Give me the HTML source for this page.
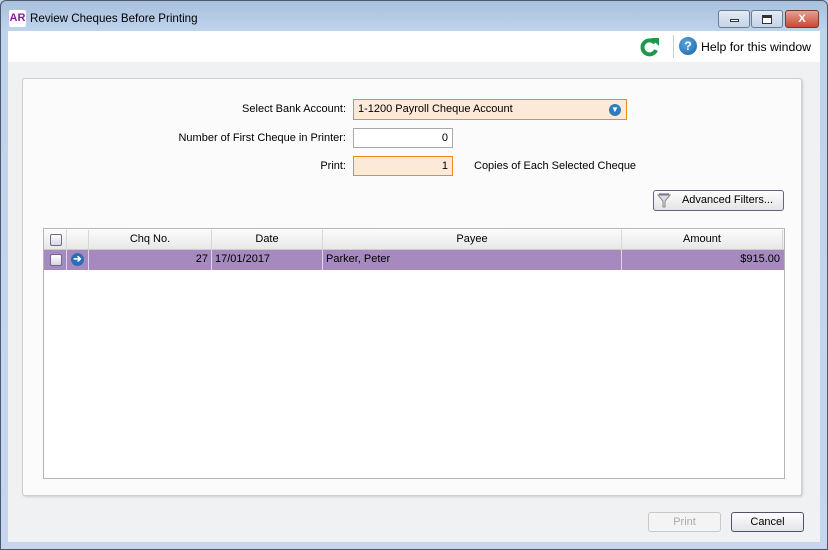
<!DOCTYPE html>
<html><head><style>
*{box-sizing:border-box;margin:0;padding:0}
body{width:828px;height:550px;overflow:hidden;font-family:"Liberation Sans",sans-serif;font-size:11px;color:#000;background:#bcd1ea;position:relative}
.a{position:absolute}
.win{left:0;top:0;width:828px;height:550px;border:1px solid #4a5a6e;border-radius:6px 6px 0 0;background:linear-gradient(#a9c0dc,#bed3ec 30px,#c4d7ee)}
.btn{border:1px solid #6e6e80;border-radius:3px;background:linear-gradient(#fdfdfd,#e4e4e8);text-align:center}
.cell{position:absolute;top:0;height:100%;border-right:1px solid #d6d6d6;line-height:19px;padding:0 3px}
.cb{position:absolute;width:12px;height:12px;border:1px solid #6a6a8a;border-radius:2px;background:linear-gradient(#fff,#d8d4e4)}
</style></head><body>
<div class="a win"></div>
<div class="a" style="left:9px;top:10px;width:17px;height:17px;background:#fff;border-radius:2px;color:#8b1a9c;font-weight:bold;font-size:11px;line-height:17px;text-align:center">AR</div>
<div class="a" style="left:30px;top:12px;font-size:11.6px">Review Cheques Before Printing</div>
<div class="a btn" style="left:718px;top:10px;width:32px;height:18px;border-color:#6a7d95;background:linear-gradient(#e3ebf5,#c3d3e7)"><div style="width:9px;height:3px;border:1px solid #333;background:#fff;margin:8px auto 0"></div></div>
<div class="a btn" style="left:751px;top:10px;width:32px;height:18px;border-color:#6a7d95;background:linear-gradient(#e3ebf5,#c3d3e7)"><div style="width:10px;height:9px;border:1px solid #333;background:#fff;margin:4px auto 0;box-shadow:inset 0 2px 0 #333"></div></div>
<div class="a btn" style="left:785px;top:10px;width:34px;height:18px;border-color:#7a3a30;background:linear-gradient(#e8a090,#c74a32);color:#fff;font-weight:bold;line-height:16px">X</div>
<div class="a" style="left:8px;top:31px;width:812px;height:511px;background:#f0f1f3"></div>
<div class="a" style="left:8px;top:31px;width:812px;height:31px;background:#fff"></div>
<svg class="a" style="left:639px;top:36px" width="22" height="22" viewBox="0 0 22 22"><path d="M16 7A7 7 0 1 0 17 14" fill="none" stroke="#1c9a4a" stroke-width="4"/><path d="M12 2L20 2L20 10Z" fill="#1c9a4a"/></svg>
<div class="a" style="left:673px;top:35px;width:1px;height:23px;background:#ccc"></div>
<div class="a" style="left:679px;top:37px;width:18px;height:18px;border-radius:50%;background:radial-gradient(circle at 40% 35%,#5aa6dc,#1b63a8);color:#fff;font-weight:bold;text-align:center;line-height:18px;font-size:12px">?</div>
<div class="a" style="left:701px;top:40px;font-size:12.3px">Help for this window</div>
<div class="a" style="left:22px;top:78px;width:780px;height:418px;background:#fbfbfb;border:1px solid #cfcfd4;border-radius:3px;box-shadow:1px 1px 2px #ccc"></div>
<div class="a" style="left:150px;top:103px;width:196px;text-align:right">Select Bank Account:</div>
<div class="a" style="left:353px;top:99px;width:274px;height:21px;background:#fde9d9;border:1px solid #ee8a22;padding:3px 4px">1-1200 Payroll Cheque Account</div>
<div class="a" style="left:609px;top:104px;width:12px;height:12px;border-radius:50%;background:#2d7cc0;color:#fff;font-size:8px;line-height:12px;text-align:center">▼</div>
<div class="a" style="left:150px;top:132px;width:196px;text-align:right">Number of First Cheque in Printer:</div>
<div class="a" style="left:353px;top:128px;width:100px;height:20px;background:#fff;border:1px solid #aaa;padding:3px 4px;text-align:right">0</div>
<div class="a" style="left:150px;top:160px;width:196px;text-align:right">Print:</div>
<div class="a" style="left:353px;top:156px;width:100px;height:20px;background:#fde9d9;border:1px solid #ee8a22;padding:3px 4px;text-align:right">1</div>
<div class="a" style="left:474px;top:160px">Copies of Each Selected Cheque</div>
<div class="a btn" style="left:653px;top:190px;width:131px;height:21px;line-height:19px;padding-left:18px;border-color:#6a6280">Advanced Filters...</div>
<svg class="a" style="left:657px;top:193px" width="14" height="15"><path d="M1 2H13L8 8V14H6V8Z" fill="#ddd" stroke="#888"/><path d="M2 1H12" stroke="#5a5aa0"/></svg>
<div class="a" style="left:43px;top:228px;width:742px;height:251px;background:#fff;border:1px solid #b5b5b5"></div>
<div class="a" style="left:44px;top:230px;width:740px;height:20px;background:linear-gradient(#fafafa,#e8e8e8);border-bottom:1px solid #ccc">
<div class="cell" style="left:0;width:23px"></div><div class="cell" style="left:23px;width:22px"></div>
<div class="cell" style="left:45px;width:123px;text-align:center">Chq No.</div>
<div class="cell" style="left:168px;width:111px;text-align:center">Date</div>
<div class="cell" style="left:279px;width:299px;text-align:center">Payee</div>
<div class="cell" style="left:578px;width:161px;text-align:center">Amount</div>
<div class="cb" style="left:6px;top:4px"></div></div>
<div class="a" style="left:44px;top:250px;width:740px;height:20px;background:#a68abf">
<div class="cell" style="left:0;width:23px;border-color:#e0d6ea"></div><div class="cell" style="left:23px;width:22px;border-color:#e0d6ea"></div>
<div class="cell" style="left:45px;width:123px;text-align:right;border-color:#e0d6ea">27</div>
<div class="cell" style="left:168px;width:111px;border-color:#e0d6ea">17/01/2017</div>
<div class="cell" style="left:279px;width:299px;border-color:#e0d6ea">Parker, Peter</div>
<div class="cell" style="left:578px;width:161px;text-align:right;border:0">$915.00</div>
<div class="cb" style="left:6px;top:4px"></div>
<div style="position:absolute;left:27px;top:3px;width:13px;height:13px;border-radius:50%;background:#2b6fb0;color:#fff;font-size:10px;line-height:13px;text-align:center;font-weight:bold">➔</div></div>
<div class="a btn" style="left:648px;top:512px;width:73px;height:20px;line-height:18px;color:#aaa;border-color:#c8c8c8;background:#f4f4f4">Print</div>
<div class="a btn" style="left:731px;top:512px;width:73px;height:20px;line-height:18px;border-color:#55506a">Cancel</div>
</body></html>
